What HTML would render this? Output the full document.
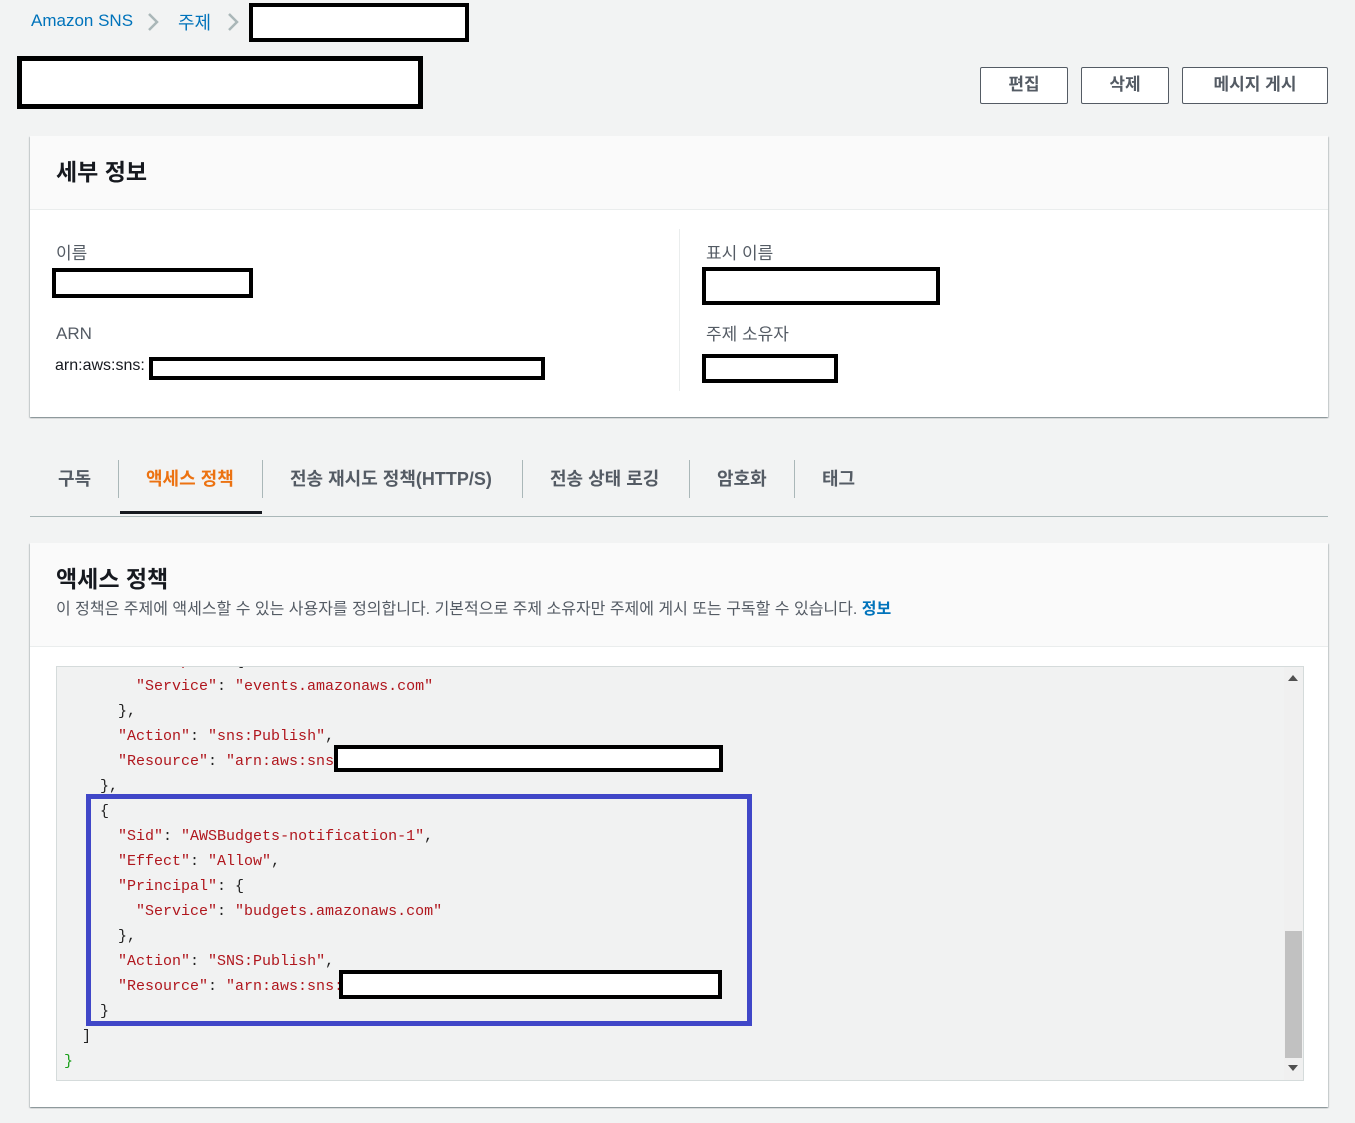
<!DOCTYPE html>
<html><head><meta charset="utf-8"><style>
*{margin:0;padding:0;box-sizing:border-box}
body{width:1355px;height:1123px;background:#f2f3f3;font-family:"Liberation Sans","Noto Sans CJK KR",sans-serif;position:relative;overflow:hidden;color:#16191f}
.a{position:absolute}
.red{position:absolute;border:4px solid #000;background:#fff}
.btn{position:absolute;top:67px;height:37px;border:1px solid #545b64;border-radius:2px;background:#fff;font-weight:bold;font-size:17px;color:#545b64;text-align:center;line-height:34px}
.panel{position:absolute;left:30px;width:1298px;background:#fff;box-shadow:0 1px 1px 0 rgba(0,28,36,.3),1px 1px 1px 0 rgba(0,28,36,.15),-1px 1px 1px 0 rgba(0,28,36,.15)}
.lbl{position:absolute;font-size:17px;color:#545b64}
.tab{position:absolute;top:465px;font-size:18px;font-weight:bold;color:#545b64}
.sep{position:absolute;top:460px;width:1px;height:38px;background:#aab7b8}
.code{position:absolute;left:56px;top:666px;width:1248px;height:415px;background:#f1f2f2;border:1px solid #d5dbdb;overflow:hidden;font-family:"Liberation Mono",monospace;font-size:15px}
.code div{position:absolute;left:7px;height:25px;line-height:25px;white-space:pre;color:#222;letter-spacing:0}
.s{color:#b0161d}
</style></head><body>
<div class="a" style="left:31px;top:11px;font-size:17px;color:#0073bb">Amazon SNS</div>
<svg class="a" style="left:146px;top:12px" width="14" height="20" viewBox="0 0 14 20"><path d="M3 2 L11 10 L3 18" fill="none" stroke="#aab7b8" stroke-width="2.5"/></svg>
<div class="a" style="left:178px;top:9px;font-size:18px;color:#0073bb">주제</div>
<svg class="a" style="left:226px;top:12px" width="14" height="20" viewBox="0 0 14 20"><path d="M3 2 L11 10 L3 18" fill="none" stroke="#aab7b8" stroke-width="2.5"/></svg>
<div class="red" style="left:249px;top:3px;width:220px;height:39px"></div>
<div class="red" style="left:17px;top:56px;width:406px;height:53px;border-width:5px"></div>
<div class="btn" style="left:980px;width:88px">편집</div>
<div class="btn" style="left:1081px;width:88px">삭제</div>
<div class="btn" style="left:1182px;width:146px">메시지 게시</div>

<div class="panel" style="top:136px;height:281px">
<div class="a" style="left:0;top:0;width:1298px;height:74px;background:#fafafa;border-bottom:1px solid #eaeded"></div>
<div class="a" style="left:26px;top:17px;font-size:23px;font-weight:bold">세부 정보</div>
<div class="lbl" style="left:26px;top:103px">이름</div>
<div class="red" style="left:22px;top:132px;width:201px;height:30px"></div>
<div class="lbl" style="left:26px;top:188px">ARN</div>
<div class="a" style="left:25px;top:221px;font-size:16px">arn:aws:sns:</div>
<div class="red" style="left:119px;top:221px;width:396px;height:23px"></div>
<div class="a" style="left:649px;top:93px;width:1px;height:162px;background:#eaeded"></div>
<div class="lbl" style="left:676px;top:103px">표시 이름</div>
<div class="red" style="left:672px;top:131px;width:238px;height:38px"></div>
<div class="lbl" style="left:676px;top:184px">주제 소유자</div>
<div class="red" style="left:672px;top:218px;width:136px;height:29px"></div>
</div>

<div class="tab" style="left:58px">구독</div>
<div class="sep" style="left:118px"></div>
<div class="tab" style="left:146px;color:#ec7211">액세스 정책</div>
<div class="a" style="left:120px;top:511px;width:142px;height:3px;background:#16191f"></div>
<div class="sep" style="left:262px"></div>
<div class="tab" style="left:290px">전송 재시도 정책(HTTP/S)</div>
<div class="sep" style="left:522px"></div>
<div class="tab" style="left:550px">전송 상태 로깅</div>
<div class="sep" style="left:689px"></div>
<div class="tab" style="left:717px">암호화</div>
<div class="sep" style="left:794px"></div>
<div class="tab" style="left:822px">태그</div>
<div class="a" style="left:30px;top:516px;width:1298px;height:1px;background:#aab7b8"></div>

<div class="panel" style="top:543px;height:564px">
<div class="a" style="left:0;top:0;width:1298px;height:104px;background:#fafafa;border-bottom:1px solid #eaeded"></div>
<div class="a" style="left:26px;top:17px;font-size:23px;font-weight:bold">액세스 정책</div>
<div class="a" style="left:26px;top:52px;font-size:16px;color:#545b64">이 정책은 주제에 액세스할 수 있는 사용자를 정의합니다. 기본적으로 주제 소유자만 주제에 게시 또는 구독할 수 있습니다. <span style="color:#0073bb;font-weight:bold">정보</span></div>
</div>

<div class="code">
<div style="top:-18px">      <span class="s">"Principal"</span>: {</div>
<div style="top:7px">        <span class="s">"Service"</span>: <span class="s">"events.amazonaws.com"</span></div>
<div style="top:32px">      },</div>
<div style="top:57px">      <span class="s">"Action"</span>: <span class="s">"sns:Publish"</span>,</div>
<div style="top:82px">      <span class="s">"Resource"</span>: <span class="s">"arn:aws:sns                                          "</span></div>
<div style="top:107px">    },</div>
<div style="top:132px">    {</div>
<div style="top:157px">      <span class="s">"Sid"</span>: <span class="s">"AWSBudgets-notification-1"</span>,</div>
<div style="top:182px">      <span class="s">"Effect"</span>: <span class="s">"Allow"</span>,</div>
<div style="top:207px">      <span class="s">"Principal"</span>: {</div>
<div style="top:232px">        <span class="s">"Service"</span>: <span class="s">"budgets.amazonaws.com"</span></div>
<div style="top:257px">      },</div>
<div style="top:282px">      <span class="s">"Action"</span>: <span class="s">"SNS:Publish"</span>,</div>
<div style="top:307px">      <span class="s">"Resource"</span>: <span class="s">"arn:aws:sns:                                         "</span></div>
<div style="top:332px">    }</div>
<div style="top:357px">  ]</div>
<div style="top:382px;color:#1a9f1a">}</div>
<div class="a" style="left:1227px;top:0;width:19px;height:413px;background:#f0f0f0"></div>
<div class="a" style="left:1228px;top:264px;width:17px;height:127px;background:#c1c1c1"></div>
<div class="a" style="left:1231px;top:8px;width:0;height:0;border-left:5px solid transparent;border-right:5px solid transparent;border-bottom:6px solid #505050"></div>
<div class="a" style="left:1231px;top:398px;width:0;height:0;border-left:5px solid transparent;border-right:5px solid transparent;border-top:6px solid #505050"></div>
</div>
<div class="red" style="left:334px;top:745px;width:389px;height:27px"></div>
<div class="red" style="left:339px;top:970px;width:383px;height:29px"></div>
<div class="a" style="left:86px;top:794px;width:666px;height:232px;border:5px solid #4047c8"></div>
</body></html>
